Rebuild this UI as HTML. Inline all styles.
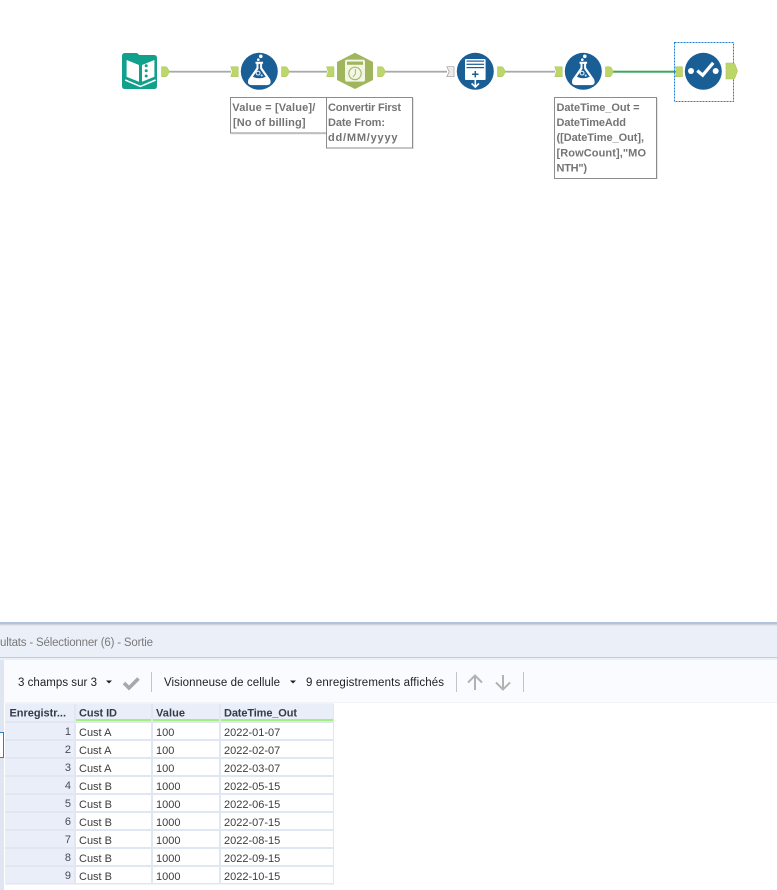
<!DOCTYPE html>
<html lang="fr">
<head>
<meta charset="utf-8">
<title>Résultats - Sélectionner (6) - Sortie</title>
<style>
html,body{margin:0;padding:0;background:#fff;width:777px;height:890px;overflow:hidden}
svg{display:block}
text{font-family:"Liberation Sans",sans-serif}
.a{font-size:11px;font-weight:bold;fill:#747474}
.c{font-size:11px;fill:#3c3c3c}
.n{font-size:11px;fill:#4a4a5a;text-anchor:end}
.h{font-size:11px;font-weight:bold;fill:#333c4a}
.t{font-size:11.5px;fill:#222}
</style>
</head>
<body>
<svg width="777" height="890" viewBox="0 0 777 890" xmlns="http://www.w3.org/2000/svg">
<defs>
  <g id="in"><path d="M0,-5H7.5V5H0L1.6,0Z" fill="#bcd768" stroke="#a9c15c" stroke-width=".5"/></g>
  <g id="out"><path d="M0,-5H4Q5.5,-5 6.2,-3.5L7.8,0L6.2,3.5Q5.5,5 4,5H0Z" fill="#bcd768" stroke="#a9c15c" stroke-width=".5"/></g>
  <g id="flask">
    <circle r="18.5" fill="#1a5e96"/>
    <circle cx="1.5" cy="-15" r="1.8" fill="#fff"/>
    <circle cx="-1" cy="-11.6" r="1.3" fill="#fff"/>
    <path d="M-3.8,-9.5H3.8V-7.6H2.8V-3.5L10.8,8Q12.8,13.8 7.5,13.8H-7.5Q-12.8,13.8 -10.8,8L-2.8,-3.5V-7.6H-3.8Z" fill="#fff"/>
    <path d="M-0.8,-7.4H0.8V-2.6L6.4,5.4Q0,8.6 -6.4,5.4L-0.8,-2.6Z" fill="#1a5e96"/>
    <circle cx="-1.2" cy="1.8" r="1.9" fill="none" stroke="#e6eef5" stroke-width="1.1"/>
    <circle cx="2.4" cy="4.2" r="1" fill="#e6eef5"/>
  </g>
</defs>

<rect width="777" height="890" fill="#fff"/>

<!-- connections -->
<rect x="169" y="70.8" width="62" height="1.8" fill="#a9a9a9"/>
<rect x="289" y="70.8" width="38" height="1.8" fill="#a9a9a9"/>
<rect x="385" y="70.8" width="62" height="1.8" fill="#a9a9a9"/>
<rect x="505" y="70.8" width="50" height="1.8" fill="#a9a9a9"/>
<rect x="613" y="70.7" width="63" height="2" fill="#3fa45f"/>

<!-- book icon -->
<path d="M122,56Q122,53 125,53H136Q138,53 139,55H154Q157,55 157,58V86Q157,89 154,89H125Q122,89 122,86Z" fill="#10a08c"/>
<path d="M126.6,60L139,65V81.8L126.6,76.8Z" fill="#fff"/>
<path d="M142,65L154.4,60V76.8L142,81.8Z" fill="#fff"/>
<circle cx="146.2" cy="65.8" r="1.5" fill="#10a08c"/>
<circle cx="146.2" cy="70.8" r="1.5" fill="#10a08c"/>
<circle cx="146.2" cy="76" r="1.5" fill="#10a08c"/>
<path d="M125.2,80L140.4,86.4L155.6,80" fill="none" stroke="#fff" stroke-width="1.5"/>
<use href="#out" x="161.5" y="71.7"/>

<!-- formula 1 -->
<use href="#in" x="230.7" y="71.7"/>
<use href="#flask" x="259.3" y="71.3"/>
<use href="#out" x="281.5" y="71.7"/>

<!-- datetime -->
<use href="#in" x="326.5" y="71.7"/>
<path d="M355,52.7L373,62V80L355,89L337,80V62Z" fill="#9fb65c"/>
<rect x="345" y="59.6" width="20" height="22" rx="2" fill="#f3f6e6"/>
<rect x="347" y="61.6" width="16" height="3.2" fill="#9fb65c"/>
<circle cx="355" cy="73.4" r="6.2" fill="none" stroke="#a6bb66" stroke-width="1.2"/>
<path d="M355.4,69V73.8L353,77" fill="none" stroke="#a6bb66" stroke-width="1"/>
<use href="#out" x="377.5" y="71.7"/>

<!-- multi-row / summarize -->
<path d="M446.8,66.7H454V76.7H446.8L449.2,71.7Z" fill="#ececec" stroke="#a0a0a0" stroke-width=".7"/>
<circle cx="475.3" cy="71.3" r="18.5" fill="#1a5e96"/>
<path d="M465,60Q465,59 466,59H484.6Q485.6,59 485.6,60V79Q485.6,80 484.6,80H466Q465,80 465,79Z" fill="#fff"/>
<rect x="466.5" y="60.5" width="17.6" height="1.2" fill="#1a5e96"/>
<rect x="466.5" y="63.7" width="17.6" height="1.2" fill="#1a5e96"/>
<rect x="466.5" y="67" width="17.6" height="1.2" fill="#1a5e96"/>
<path d="M475.3,71V77.4M472.1,74.2H478.5" stroke="#1a5e96" stroke-width="1.5" fill="none"/>
<path d="M475.3,80V87M471.6,83.4L475.3,87.1L479,83.4" stroke="#fff" stroke-width="1.6" fill="none"/>
<use href="#out" x="497.5" y="71.7"/>

<!-- formula 2 -->
<use href="#in" x="554.7" y="71.7"/>
<use href="#flask" x="583.3" y="71.3"/>
<use href="#out" x="605.5" y="71.7"/>

<!-- select -->
<use href="#in" x="675" y="71.7"/>
<circle cx="703.3" cy="71.3" r="18.5" fill="#1a5e96"/>
<circle cx="691" cy="71" r="3" fill="#fff"/>
<circle cx="715.7" cy="71" r="3" fill="#fff"/>
<path d="M697.3,70.6L702.7,75.2L713.2,62.8" fill="none" stroke="#fff" stroke-width="3.2"/>
<rect x="674.5" y="42.5" width="59" height="59" fill="none" stroke="#1b7fd4" stroke-width="1" stroke-dasharray="2 1"/>
<path d="M726,63H733Q734.5,63 735,64.5L737.5,71L735,77.5Q734.5,79 733,79H726Z" fill="#bcd768" stroke="#a9c15c" stroke-width=".6"/>

<!-- annotations -->
<rect x="230.5" y="97.5" width="96" height="35.5" fill="#fff" stroke="#8c8c8c"/>
<rect x="231" y="133.4" width="95" height="1" fill="#dedede"/>
<text class="a" x="232.3" y="111" textLength="83">Value = [Value]/</text>
<text class="a" x="233" y="126" textLength="72.5">[No of billing]</text>

<rect x="326.5" y="97.5" width="86" height="50.5" fill="#fff" stroke="#8c8c8c"/>
<rect x="413" y="98" width="1" height="51" fill="#e4e4e4"/>
<text class="a" x="328" y="111" textLength="73">Convertir First</text>
<text class="a" x="328" y="126" textLength="57">Date From:</text>
<text class="a" x="328" y="141" textLength="69.5">dd/MM/yyyy</text>

<rect x="554.5" y="97.5" width="102" height="81" fill="#fff" stroke="#8c8c8c"/>
<rect x="657" y="98" width="1" height="81" fill="#e4e4e4"/>
<text class="a" x="556.5" y="111" textLength="83">DateTime_Out =</text>
<text class="a" x="556.5" y="126" textLength="69.5">DateTimeAdd</text>
<text class="a" x="556.5" y="141" textLength="87.5">([DateTime_Out],</text>
<text class="a" x="556.5" y="156.5" textLength="89.5">[RowCount],"MO</text>
<text class="a" x="556.5" y="171.5" textLength="30.5">NTH")</text>

<!-- results panel -->
<rect x="0" y="622" width="777" height="2.4" fill="#b3c3df"/>
<rect x="0" y="624.4" width="777" height="1.2" fill="#d8d8d8"/>
<rect x="0" y="625.6" width="777" height="32" fill="#ebeff8"/>
<rect x="0" y="657" width="777" height="1" fill="#c9c9c9"/>
<rect x="0" y="658" width="777" height="232" fill="#fff"/>
<rect x="0" y="658" width="777" height="2.5" fill="#ebeff8"/>
<rect x="0" y="660" width="4" height="230" fill="#dfe6f2"/>
<rect x="4" y="660" width="773" height="42" fill="#f9fbfe"/>
<rect x="4" y="702" width="773" height="1" fill="#f1f3f8"/>
<text x="0" y="646" font-size="11.5" fill="#7a7a7a" textLength="153">ultats - Sélectionner (6) - Sortie</text>

<!-- toolbar -->
<text class="t" x="18" y="686" textLength="79">3 champs sur 3</text>
<path d="M106,680.5H112L109,683.5Z" fill="#222"/>
<path d="M124,683L129,688L138.5,678.5" fill="none" stroke="#a8a8a8" stroke-width="3.6"/>
<rect x="151" y="672" width="1" height="20" fill="#c4c4c4"/>
<text class="t" x="164" y="686" textLength="116">Visionneuse de cellule</text>
<path d="M290,680.5H296L293,683.5Z" fill="#222"/>
<text class="t" x="306" y="686" textLength="138">9 enregistrements affichés</text>
<rect x="456" y="672" width="1" height="20" fill="#c4c4c4"/>
<path d="M475,690V675.5M468,682.5L475,675.5L482,682.5" fill="none" stroke="#b2b2b2" stroke-width="2"/>
<path d="M503,675V689.5M496,682.5L503,689.5L510,682.5" fill="none" stroke="#b2b2b2" stroke-width="2"/>
<rect x="523" y="672" width="1" height="20" fill="#c4c4c4"/>

<!-- left selection marker -->
<rect x="-2" y="732.5" width="5.5" height="25" fill="#fff" stroke="#2b7fc4" stroke-width="1"/>

<!-- table -->
<rect x="5" y="703.5" width="329" height="181" fill="#e0e6f2"/>
<rect x="5" y="704" width="69" height="17" fill="#e9eef8"/>
<rect x="76" y="704" width="75" height="17" fill="#e9eef8"/>
<rect x="153" y="704" width="66" height="17" fill="#e9eef8"/>
<rect x="221" y="704" width="112" height="17" fill="#e9eef8"/>
<rect x="76" y="719" width="75" height="2" fill="#a2ef7e"/>
<rect x="153" y="719" width="66" height="2" fill="#a2ef7e"/>
<rect x="221" y="719" width="112" height="2" fill="#a2ef7e"/>
<text class="h" x="9.5" y="716.5" textLength="56.5">Enregistr...</text>
<text class="h" x="79" y="716.5" textLength="38">Cust ID</text>
<text class="h" x="156" y="716.5" textLength="29">Value</text>
<text class="h" x="224" y="716.5" textLength="73">DateTime_Out</text>

<g id="rows">
<rect x="5" y="723" width="69" height="16" fill="#e9eef8"/><rect x="76" y="723" width="75" height="16" fill="#fff"/><rect x="153" y="723" width="66" height="16" fill="#fff"/><rect x="221" y="723" width="112" height="16" fill="#fff"/>
<text class="n" x="71" y="735">1</text><text class="c" x="79" y="736">Cust A</text><text class="c" x="156" y="736">100</text><text class="c" x="224" y="736">2022-01-07</text>

<rect x="5" y="741" width="69" height="16" fill="#e9eef8"/><rect x="76" y="741" width="75" height="16" fill="#fff"/><rect x="153" y="741" width="66" height="16" fill="#fff"/><rect x="221" y="741" width="112" height="16" fill="#fff"/>
<text class="n" x="71" y="753">2</text><text class="c" x="79" y="754">Cust A</text><text class="c" x="156" y="754">100</text><text class="c" x="224" y="754">2022-02-07</text>

<rect x="5" y="759" width="69" height="16" fill="#e9eef8"/><rect x="76" y="759" width="75" height="16" fill="#fff"/><rect x="153" y="759" width="66" height="16" fill="#fff"/><rect x="221" y="759" width="112" height="16" fill="#fff"/>
<text class="n" x="71" y="771">3</text><text class="c" x="79" y="772">Cust A</text><text class="c" x="156" y="772">100</text><text class="c" x="224" y="772">2022-03-07</text>

<rect x="5" y="777" width="69" height="16" fill="#e9eef8"/><rect x="76" y="777" width="75" height="16" fill="#fff"/><rect x="153" y="777" width="66" height="16" fill="#fff"/><rect x="221" y="777" width="112" height="16" fill="#fff"/>
<text class="n" x="71" y="789">4</text><text class="c" x="79" y="790">Cust B</text><text class="c" x="156" y="790">1000</text><text class="c" x="224" y="790">2022-05-15</text>

<rect x="5" y="795" width="69" height="16" fill="#e9eef8"/><rect x="76" y="795" width="75" height="16" fill="#fff"/><rect x="153" y="795" width="66" height="16" fill="#fff"/><rect x="221" y="795" width="112" height="16" fill="#fff"/>
<text class="n" x="71" y="807">5</text><text class="c" x="79" y="808">Cust B</text><text class="c" x="156" y="808">1000</text><text class="c" x="224" y="808">2022-06-15</text>

<rect x="5" y="813" width="69" height="16" fill="#e9eef8"/><rect x="76" y="813" width="75" height="16" fill="#fff"/><rect x="153" y="813" width="66" height="16" fill="#fff"/><rect x="221" y="813" width="112" height="16" fill="#fff"/>
<text class="n" x="71" y="825">6</text><text class="c" x="79" y="826">Cust B</text><text class="c" x="156" y="826">1000</text><text class="c" x="224" y="826">2022-07-15</text>

<rect x="5" y="831" width="69" height="16" fill="#e9eef8"/><rect x="76" y="831" width="75" height="16" fill="#fff"/><rect x="153" y="831" width="66" height="16" fill="#fff"/><rect x="221" y="831" width="112" height="16" fill="#fff"/>
<text class="n" x="71" y="843">7</text><text class="c" x="79" y="844">Cust B</text><text class="c" x="156" y="844">1000</text><text class="c" x="224" y="844">2022-08-15</text>

<rect x="5" y="849" width="69" height="16" fill="#e9eef8"/><rect x="76" y="849" width="75" height="16" fill="#fff"/><rect x="153" y="849" width="66" height="16" fill="#fff"/><rect x="221" y="849" width="112" height="16" fill="#fff"/>
<text class="n" x="71" y="861">8</text><text class="c" x="79" y="862">Cust B</text><text class="c" x="156" y="862">1000</text><text class="c" x="224" y="862">2022-09-15</text>

<rect x="5" y="867" width="69" height="16" fill="#e9eef8"/><rect x="76" y="867" width="75" height="16" fill="#fff"/><rect x="153" y="867" width="66" height="16" fill="#fff"/><rect x="221" y="867" width="112" height="16" fill="#fff"/>
<text class="n" x="71" y="879">9</text><text class="c" x="79" y="880">Cust B</text><text class="c" x="156" y="880">1000</text><text class="c" x="224" y="880">2022-10-15</text>
</g>
</svg>
</body>
</html>
